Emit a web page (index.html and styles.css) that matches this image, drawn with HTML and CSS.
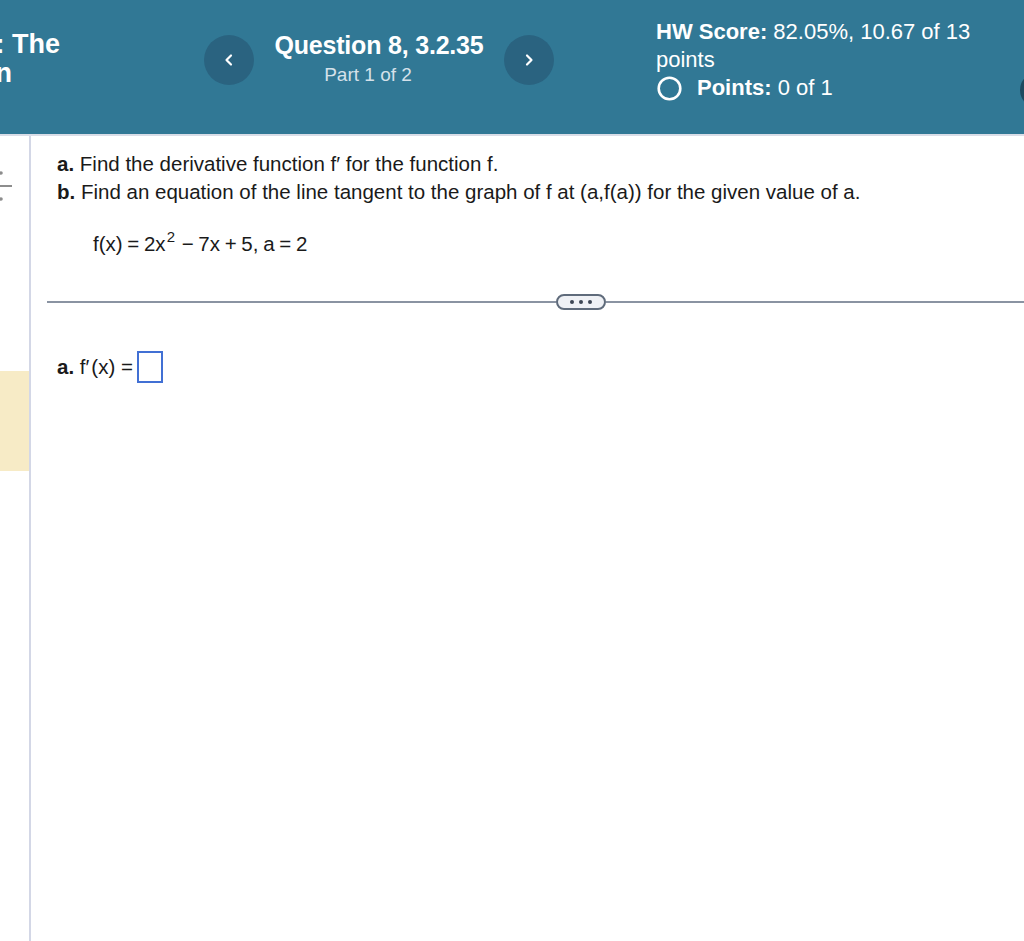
FILE: index.html
```html
<!DOCTYPE html>
<html>
<head>
<meta charset="utf-8">
<link rel="stylesheet" href="styles.css">
</head>
<body>
<header class="topbar">
  <div class="course">
    <div class="course-text">
      <div>Section: The</div>
      <div>Function</div>
    </div>
  </div>
  <button class="nav-btn prev" aria-label="Previous">
    <svg width="12" height="14" viewBox="0 0 12 14"><path d="M8 2.5 L3.5 7 L8 11.5" fill="none" stroke="#fff" stroke-width="2.2" stroke-linecap="round" stroke-linejoin="round"/></svg>
  </button>
  <div class="qtitle">
    <div class="qname">Question 8, 3.2.35</div>
    <div class="qpart">Part 1 of 2</div>
  </div>
  <button class="nav-btn next" aria-label="Next">
    <svg width="12" height="14" viewBox="0 0 12 14"><path d="M4 2.5 L8.5 7 L4 11.5" fill="none" stroke="#fff" stroke-width="2.2" stroke-linecap="round" stroke-linejoin="round"/></svg>
  </button>
  <div class="score">
    <div><b>HW Score:</b> 82.05%, 10.67 of 13 points</div>
    <div class="points-line">
      <svg class="ring" width="25" height="25" viewBox="0 0 25 25"><circle cx="12.5" cy="12.5" r="10.8" fill="none" stroke="#fff" stroke-width="2.6"/></svg>
      <span><b>Points:</b> 0 of 1</span>
    </div>
  </div>
  <div class="edge-btn"></div>
</header>
<div class="page">
  <aside class="sidebar">
    <svg class="side-icon" width="29" height="36" viewBox="0 0 29 36"><line x1="0" y1="18" x2="12" y2="18" stroke="#8d8d8d" stroke-width="2"/><circle cx="1" cy="5" r="1.8" fill="#8d8d8d"/><circle cx="1" cy="31" r="1.8" fill="#8d8d8d"/></svg>
    <div class="side-note"></div>
  </aside>
  <main class="main">
    <div class="prompt">
      <div><b>a.</b> Find the derivative function f′ for the function f.</div>
      <div><b>b.</b> Find an equation of the line tangent to the graph of f at (a,f(a)) for the given value of a.</div>
    </div>
    <div class="formula">f(x) = 2x<sup>2</sup> − 7x + 5, a = 2</div>
    <div class="divider">
      <span class="rule left"></span>
      <span class="pill"><i></i><i></i><i></i></span>
      <span class="rule right"></span>
    </div>
    <div class="answer">
      <b>a.</b>&nbsp;<span class="fp">f′</span><span>(x) =</span>
      <span class="box"></span>
    </div>
  </main>
</div>
</body>
</html>
```

FILE: styles.css
```css
* { box-sizing: border-box; }
html, body { margin: 0; padding: 0; background: #fff; }
body {
  font-family: "Liberation Sans", Arial, Helvetica, sans-serif;
  color: #1a1a1a;
  width: 1024px;
  height: 941px;
  overflow: hidden;
}

.topbar {
  height: 136px;
  background: #317895;
  border-bottom: 2px solid #d9dde7;
  display: flex;
  align-items: flex-start;
  overflow: hidden;
  color: #fff;
}

.course {
  width: 70px;
  flex: none;
  overflow: hidden;
  padding-top: 30px;
  font-size: 27px;
  font-weight: 700;
  line-height: 29px;
}
.course-text {
  margin-left: -102px;
  white-space: nowrap;
}

.nav-btn {
  flex: none;
  width: 50px;
  height: 50px;
  margin-top: 35px;
  border: none;
  border-radius: 50%;
  background: #2a6380;
  display: flex;
  align-items: center;
  justify-content: center;
  padding: 0;
}
.prev { margin-left: 134px; }

.qtitle {
  width: 250px;
  flex: none;
  text-align: center;
  padding-top: 30px;
}
.qname {
  font-size: 25px;
  font-weight: 700;
  line-height: 30px;
  letter-spacing: -0.2px;
}
.qpart {
  margin-top: 2px;
  font-size: 19px;
  line-height: 26px;
  color: #d5e1ea;
  padding-right: 22px;
}

.score {
  width: 330px;
  flex: none;
  margin-left: 102px;
  padding-top: 18px;
  font-size: 22px;
  line-height: 28px;
}
.points-line {
  display: flex;
  align-items: center;
  gap: 15px;
  margin-left: 1px;
}
.ring { flex: none; display: block; }

.edge-btn {
  flex: none;
  width: 36px;
  height: 36px;
  border-radius: 50%;
  background: #1d4a60;
  margin-top: 72px;
  margin-left: 34px;
}

.page {
  display: flex;
  height: 805px;
}
.sidebar {
  width: 31px;
  flex: none;
  border-right: 2px solid #d3d7e6;
  display: flex;
  flex-direction: column;
}
.side-icon { display: block; margin-top: 32px; }
.side-note {
  margin-top: 167px;
  height: 100px;
  background: #f7ebc6;
}

.main {
  flex: 1;
  padding-top: 14px;
  padding-left: 26px;
  font-size: 20.5px;
  line-height: 28px;
}
.prompt b, .answer b { font-weight: 700; }

.formula {
  margin-top: 24px;
  margin-left: 36px;
  word-spacing: -1px;
}
.formula sup {
  font-size: 15px;
  line-height: 0;
  vertical-align: 9px;
  margin-left: 1px;
  margin-right: 2px;
}

.divider {
  display: flex;
  align-items: center;
  margin-top: 36px;
  margin-left: -10px;
  height: 16px;
}
.rule {
  height: 2px;
  background: #8a93a2;
}
.rule.left { width: 509px; flex: none; }
.rule.right { flex: 1; }
.pill {
  flex: none;
  width: 50px;
  height: 16px;
  border: 2px solid #5f6b7b;
  border-radius: 8px;
  background: #eff1f5;
  display: flex;
  align-items: center;
  justify-content: center;
  gap: 5px;
}
.pill i {
  width: 4px;
  height: 4px;
  border-radius: 50%;
  background: #3d4654;
}

.answer {
  display: flex;
  align-items: center;
  margin-top: 41px;
  height: 32px;
}
.answer span { white-space: pre; }
.answer .fp { margin-right: 2px; }
.box {
  width: 26px;
  height: 32px;
  margin-left: 4px;
  border: 2px solid #4170d4;
  background: #fff;
}
```
